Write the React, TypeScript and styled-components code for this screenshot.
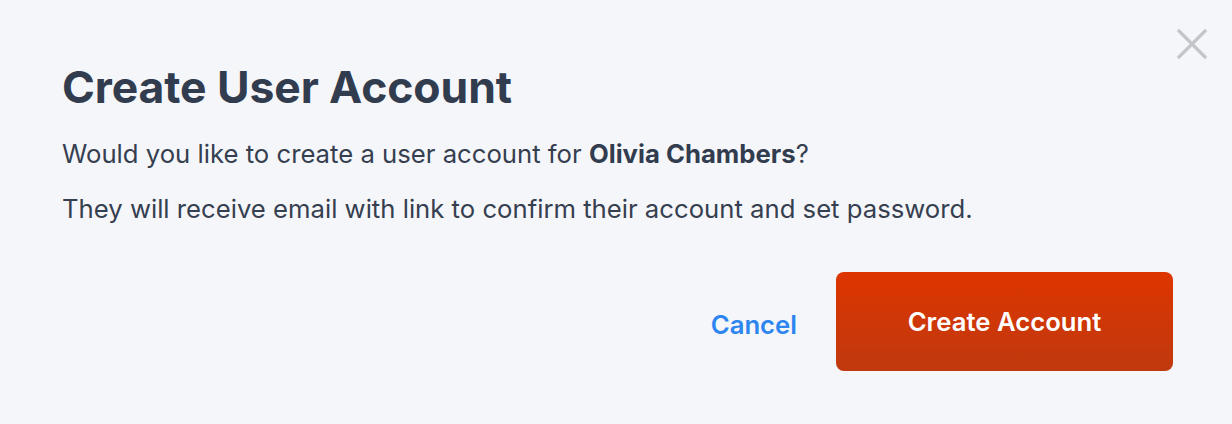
import React from 'react';
import styled, { createGlobalStyle } from 'styled-components';

const GlobalStyle = createGlobalStyle`
  html, body {
    margin: 0;
    padding: 0;
    background: #f5f6fa;
    font-family: Inter, "Open Sans", sans-serif;
  }
`;

const Dialog = styled.div`
  position: relative;
  width: 1232px;
  height: 424px;
  box-sizing: border-box;
  padding: 61px 59px 0 62px;
  background: #f5f6fa;
  color: #333c4e;
`;

const CloseButton = styled.button`
  position: absolute;
  top: 28px;
  right: 24px;
  width: 32px;
  height: 32px;
  padding: 0;
  border: none;
  background: none;
  cursor: pointer;
  display: flex;
  align-items: center;
  justify-content: center;
`;

const Title = styled.h1`
  margin: 0 0 25px;
  font-size: 44.5px;
  line-height: 52px;
  font-weight: 700;
  letter-spacing: -0.1px;
  color: #323c4f;
`;

const Text = styled.p`
  margin: 0 0 23px;
  font-size: 25.7px;
  line-height: 32px;
  color: #363f50;

  strong {
    font-weight: 700;
    color: #323c4f;
  }
`;

const Actions = styled.div`
  display: flex;
  justify-content: flex-end;
  align-items: center;
  gap: 39px;
  margin-top: 47px;
`;

const LinkButton = styled.button`
  border: none;
  background: none;
  padding: 6px 0 0;
  font-family: inherit;
  font-size: 25.7px;
  font-weight: 600;
  color: #2d86f0;
  cursor: pointer;
`;

const PrimaryButton = styled.button`
  width: 337px;
  height: 99px;
  border: none;
  border-radius: 8px;
  background: linear-gradient(180deg, #dd3500 0%, #c0390f 100%);
  color: #ffffff;
  font-family: inherit;
  font-size: 25.7px;
  font-weight: 600;
  cursor: pointer;
`;

export default function App() {
  return (
    <>
      <GlobalStyle />
      <Dialog>
        <CloseButton aria-label="Close">
          <svg width="30" height="30" viewBox="0 0 30 30">
            <path d="M2 2 L28 28 M28 2 L2 28" stroke="#c3c5cb" strokeWidth="3.2" strokeLinecap="square" />
          </svg>
        </CloseButton>
        <Title>Create User Account</Title>
        <Text>
          Would you like to create a user account for <strong>Olivia Chambers</strong>?
        </Text>
        <Text>They will receive email with link to confirm their account and set password.</Text>
        <Actions>
          <LinkButton>Cancel</LinkButton>
          <PrimaryButton>Create Account</PrimaryButton>
        </Actions>
      </Dialog>
    </>
  );
}
